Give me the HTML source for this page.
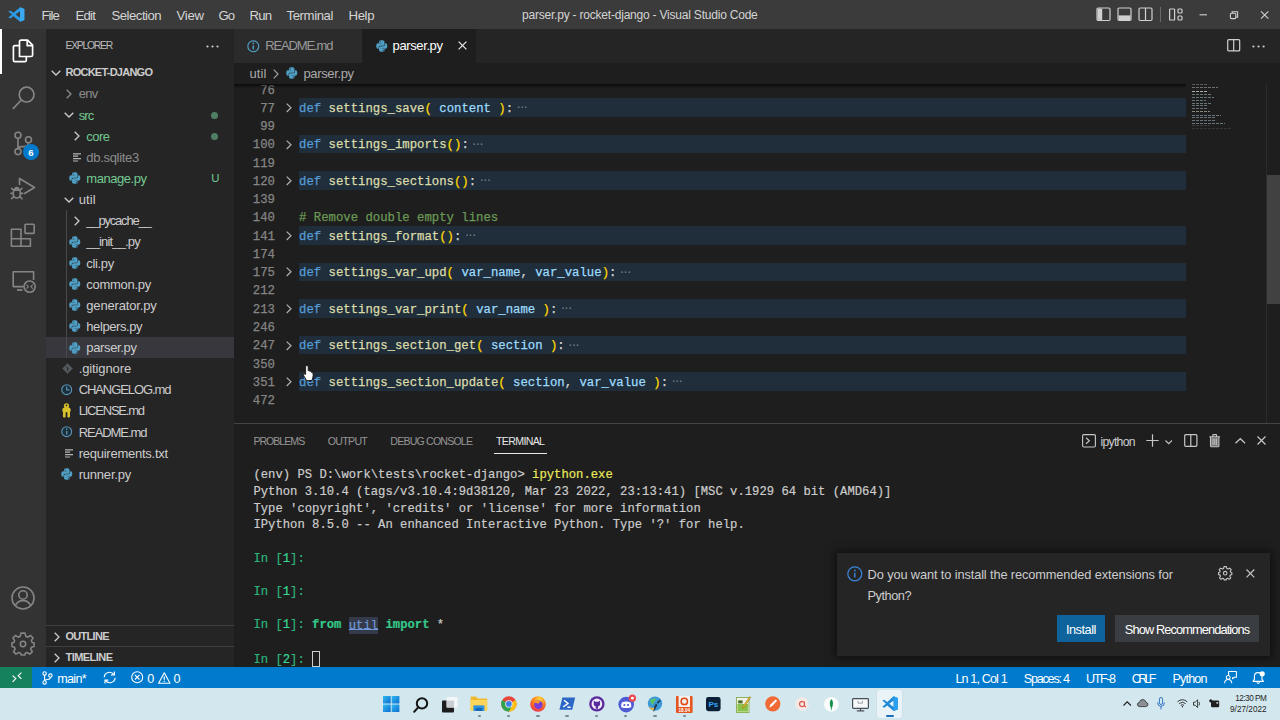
<!DOCTYPE html>
<html lang="en"><head>
<meta charset="utf-8">
<title>parser.py - rocket-django - Visual Studio Code</title>
<style>
*{box-sizing:border-box;margin:0;padding:0}
html,body{width:1280px;height:720px;overflow:hidden;background:#1e1e1e}
body{position:relative;font-family:"Liberation Sans",sans-serif;font-size:13px;color:#ccc;-webkit-font-smoothing:antialiased}
.abs{position:absolute}
.t{position:absolute;white-space:nowrap;display:block}
svg{display:block;overflow:visible}
/* title bar */
#titlebar{left:0;top:0;width:1280px;height:29px;background:#3b3b3b}
#titlebar .m{top:0.9px;height:29px;line-height:29px;font-size:13.2px;color:#d4d4d4}
/* activity bar */
#activity{left:0;top:29px;width:46px;height:638px;background:#333333}
/* sidebar */
#sidebar{left:46px;top:29px;width:188px;height:638px;background:#252526}
.row{position:absolute;left:0;width:188px;height:21px;line-height:21px;font-size:13px;color:#cccccc;white-space:nowrap}
.row .t{top:0;height:21px;line-height:21.5px}
.row .hd{font-size:11px;font-weight:bold;color:#cccccc;line-height:21px}
.dot{position:absolute;top:7px;width:7px;height:7px;border-radius:4px;background:#4f7f63}
.g{color:#73c991}.dim{color:#8c8c8c}
/* editor */
#tabs{left:234px;top:29px;width:1046px;height:34px;background:#252526}
#crumbs{left:234px;top:63px;width:1046px;height:21px;background:#1e1e1e}
#code{left:234px;top:84px;width:1046px;height:339px;background:#1e1e1e;overflow:hidden}
.ln{position:absolute;left:0;width:1046px;height:18.27px;line-height:18.27px;font-family:"Liberation Mono",monospace;font-size:12.3px;white-space:pre;color:#d4d4d4;-webkit-text-stroke:0.25px}
.ln .no{position:absolute;top:1.4px;left:0;width:41px;text-align:right;color:#858585}
.ln .tx{position:absolute;top:1.4px;left:65px}
.ln.f::before{content:"";position:absolute;left:65px;top:0;width:887px;height:18.27px;background:#202d3a}
.k{color:#569cd6}.fn{color:#dcdcaa}.v{color:#9cdcfe}.p{color:#ffd700}.c{color:#6a9955}.e{color:#7d8791;font-size:10px;letter-spacing:-2.4px;margin-left:2.6px;position:relative;top:-1.4px;-webkit-text-stroke:0}
.tb{top:0;height:35px;line-height:34px;font-size:13px}
.cb{top:0.6px;height:20px;line-height:20px;font-size:13px;color:#a9a9a9}
.mm{left:958px;height:1px;background:repeating-linear-gradient(90deg,currentColor 0 3px,transparent 3px 4px)}
/* panel */
#panel{left:234px;top:425px;width:1046px;height:242px;background:#1e1e1e}
#pborder{left:234px;top:423.3px;width:1046px;height:1px;background:#454545}
.pt{top:7.2px;height:18px;line-height:18px;font-size:10.6px}
.tl{position:absolute;left:19.4px;letter-spacing:0.02px;height:16.64px;line-height:16.64px;font-family:"Liberation Mono",monospace;font-size:12.2px;white-space:pre;color:#cccccc;-webkit-text-stroke:0.2px}
.tg{color:#2db57c}.tb2{color:#38d996}.ty{color:#e8e85a}.tk{color:#35c98a;font-weight:bold}.tu{color:#6e98d8;background:#353a4a;text-decoration:underline;padding:1.5px 0}
.cur{display:inline-block;width:7.8px;height:16px;border:1px solid #cfcfcf;vertical-align:-3.6px}
#notif{left:837.2px;top:553.3px;width:432.4px;height:103px;background:#252526;box-shadow:0 0 8px 2px rgba(0,0,0,.5)}
#notif .n{font-size:12.8px;line-height:21px;color:#cccccc}
.btn{height:26.6px}
/* status */
#status{left:0;top:667px;width:1280px;height:21px;background:#007acc;color:#fff;font-size:12.6px}
#status .s{top:2.1px;height:21px;line-height:21px}
#taskbar{left:0;top:688px;width:1280px;height:32px;background:#d3e8ee}
.tk2{font-size:8.2px;line-height:11px;color:#1f1f1f}
</style>
</head>
<body>
<div id="titlebar" class="abs">
<svg class="abs" style="left:8px;top:7px" width="17" height="15" viewBox="0 0 100 100" preserveAspectRatio="none"><path d="M71 2 L96 13 V87 L71 98 L32 61 L13 76 L2 70 L24 50 L2 30 L13 24 L32 39 Z M71 29 L44 50 L71 71 Z" fill="#2a9be6" fill-rule="evenodd"></path><path d="M71 2 L96 13 V87 L71 98 Z" fill="#3aa9f0"></path></svg>
<span class="t m" style="left: 41.5px; width: 18.3px; letter-spacing: -0.98px;">File</span>
<span class="t m" style="left: 75.5px; width: 20.3px; letter-spacing: -0.81px;">Edit</span>
<span class="t m" style="left: 111.5px; width: 50.2px; letter-spacing: -0.51px;">Selection</span>
<span class="t m" style="left: 176.5px; width: 27.5px; letter-spacing: -0.29px;">View</span>
<span class="t m" style="left: 218.5px; width: 16.5px; letter-spacing: -1.09px;">Go</span>
<span class="t m" style="left: 249.5px; width: 22.5px; letter-spacing: -0.85px;">Run</span>
<span class="t m" style="left: 286.5px; width: 47px; letter-spacing: -0.41px;">Terminal</span>
<span class="t m" style="left: 348.5px; width: 26px; letter-spacing: -0.38px;">Help</span>
<span class="t m" style="left: 522px; width: 236px; font-size: 12px; letter-spacing: -0.21px;">parser.py - rocket-django - Visual Studio Code</span>
<svg class="abs" style="left:1096px;top:7px" width="90" height="15" viewBox="0 0 90 15" fill="none" stroke="#d0d0d0" stroke-width="1.2">
<rect x="1" y="1" width="13" height="12.5" rx="1.2"></rect><rect x="1.6" y="1.6" width="4.6" height="11.3" fill="#d0d0d0" stroke="none"></rect>
<rect x="22" y="1" width="13" height="12.5" rx="1.2"></rect><rect x="22.6" y="8.4" width="11.8" height="4.6" fill="#d0d0d0" stroke="none"></rect>
<rect x="43" y="1" width="13" height="12.5" rx="1.2"></rect><path d="M49.5 1V13.5"></path>
<path d="M64.5 0V15" stroke="#6a6a6a" stroke-width="1"></path>
<rect x="73.6" y="2" width="5" height="11" rx="0.6"></rect><rect x="82" y="2" width="4" height="4" rx="1"></rect><rect x="82" y="9" width="4" height="4" rx="1"></rect>
</svg>
<svg class="abs" style="left:1199px;top:8px" width="72" height="14" viewBox="0 0 72 14" fill="none" stroke="#d0d0d0" stroke-width="1.1">
<path d="M0.5 6.8H8"></path>
<rect x="31.4" y="5.2" width="5.4" height="5.4" rx="1"></rect><path d="M33.2 5.2V3.8H38.6V9.2H36.8"></path>
<path d="M62 3.3L69.4 10.6M69.4 3.3L62 10.6"></path>
</svg>
</div>
<div id="activity" class="abs">
<div class="abs" style="left:0;top:0;width:2px;height:45px;background:#ffffff"></div>
<!-- explorer -->
<svg class="abs" style="left:12px;top:10px" width="22" height="24" viewBox="0 0 22 24" fill="none" stroke="#ffffff" stroke-width="1.7" stroke-linejoin="round"><path d="M7.5 17.5V2.6Q7.5 1.2 9 1.2H15.6L20.6 6.2V16Q20.6 17.5 19 17.5Z"></path><path d="M15.2 1.4V6.6H20.4"></path><path d="M7.3 6.6H2.9Q1.4 6.6 1.4 8.1V21.2Q1.4 22.7 2.9 22.7H12.8Q14.3 22.7 14.3 21.2V17.7"></path></svg>
<!-- search -->
<svg class="abs" style="left:12px;top:57px" width="24" height="24" viewBox="0 0 24 24" fill="none" stroke="#858585" stroke-width="1.7" stroke-linecap="round"><circle cx="14.6" cy="8.6" r="7.4"></circle><path d="M9.3 14L1.3 22.4"></path></svg>
<!-- scm -->
<svg class="abs" style="left:13px;top:102px" width="22" height="26" viewBox="0 0 22 26" fill="none" stroke="#858585" stroke-width="1.6"><circle cx="5" cy="4.2" r="3"></circle><circle cx="5" cy="20.6" r="3"></circle><circle cx="15.5" cy="8.8" r="3"></circle><path d="M5 7.2V17.6M15.5 11.8Q15.5 15.4 11 15.6H8Q5.4 15.8 5 17.6"></path></svg>
<div class="abs" style="left:23px;top:115px;width:15.6px;height:15.6px;border-radius:8px;background:#007acc"></div>
<span class="t" style="left:28.3px;top:116.5px;font-size:9.5px;font-weight:bold;color:#fff;line-height:13px">6</span>
<!-- debug -->
<svg class="abs" style="left:10px;top:148px" width="26" height="26" viewBox="0 0 26 26" fill="none" stroke="#858585" stroke-width="1.6" stroke-linejoin="round" stroke-linecap="round"><path d="M9.5 7.5V1.5L24.5 10.5L14.5 16.5"></path><ellipse cx="6.8" cy="16.4" rx="3.6" ry="4.6"></ellipse><path d="M3.6 13.2H10M1 16.4H3.2M10.4 16.4H12.6M1.6 11.4L3.8 13.2M12 11.4L9.8 13.2M1.6 21.6L3.8 19.6M12 21.6L9.8 19.6M5 11.6Q6.8 9.8 8.6 11.6"></path></svg>
<!-- extensions -->
<svg class="abs" style="left:10px;top:194px" width="26" height="25" viewBox="0 0 26 25" fill="none" stroke="#858585" stroke-width="1.6" stroke-linejoin="round"><path d="M1.4 6.2H11V15.8H20.4V23.2H1.4ZM1.4 15.8H11M11 15.8V23.2"></path><rect x="15" y="1.2" width="9.2" height="9.2" rx="0.8"></rect></svg>
<!-- remote explorer -->
<svg class="abs" style="left:11px;top:241px" width="26" height="24" viewBox="0 0 26 24" fill="none" stroke="#858585" stroke-width="1.6" stroke-linejoin="round"><path d="M12.5 16.6H2.2V1.8H22.6V10"></path><path d="M6 20H11.5" stroke-width="1.8"></path><circle cx="18.6" cy="16.6" r="5.6"></circle><path d="M15.4 14.6L17.3 16.6L15.4 18.6M21.8 14.6L19.9 16.6L21.8 18.6" stroke-width="1.1"></path></svg>
<!-- account -->
<svg class="abs" style="left:10px;top:556px" width="26" height="26" viewBox="0 0 26 26" fill="none" stroke="#858585" stroke-width="1.6"><circle cx="13" cy="13" r="11"></circle><circle cx="13" cy="10" r="4.2"></circle><path d="M5.4 20.8Q7.2 15.6 13 15.6Q18.8 15.6 20.6 20.8"></path></svg>
<!-- gear -->
<svg class="abs" style="left:11px;top:602.6px" width="24" height="24" viewBox="-13 -13 26 26" fill="none" stroke="#858585" stroke-width="1.7" stroke-linejoin="round"><circle r="2.9"></circle><path d="M-2.2 -11.8H2.2L3 -8.4L5.2 -7.4L8.2 -9.2L10.9 -6.5L9.1 -3.6L9.9 -1.6L12 -1.2V2.6L9.1 3.4L8.3 5.4L10.1 8.3L7.4 11L4.4 9.2L2.4 10.1L2 12H-2L-2.6 10.1L-4.6 9.2L-7.6 11L-10.3 8.3L-8.5 5.4L-9.3 3.4L-12 2.6V-1.2L-9.9 -1.6L-9.1 -3.6L-10.9 -6.5L-8.2 -9.2L-5.2 -7.4L-3 -8.4Z"></path></svg>
</div>
<div id="sidebar" class="abs">
<span class="t" style="left: 19.5px; top: 7px; width: 47.7px; font-size: 10.4px; line-height: 20px; color: rgb(187, 187, 187); letter-spacing: -1.27px;">EXPLORER</span>
<svg class="abs" style="left:159.5px;top:15.5px" width="13" height="3" viewBox="0 0 13 3" fill="#cccccc"><circle cx="1.5" cy="1.5" r="1.1"></circle><circle cx="6.5" cy="1.5" r="1.1"></circle><circle cx="11.5" cy="1.5" r="1.1"></circle></svg>
<div class="row" style="top:33.2px"><svg class="abs" style="left:4.799999999999997px;top:7.5px" width="10" height="6" viewBox="0 0 10 6" fill="none" stroke="#cccccc" stroke-width="1.3"><path d="M0.7 0.7L5 5L9.3 0.7"></path></svg><span class="t hd" style="left: 19.5px; width: 87.5px; letter-spacing: -0.76px;">ROCKET-DJANGO</span></div>
<div class="row" style="top:54.3px"><svg class="abs" style="left:20px;top:5.5px" width="6" height="10" viewBox="0 0 6 10" fill="none" stroke="#8c8c8c" stroke-width="1.3"><path d="M0.7 0.7L5 5L0.7 9.3"></path></svg><span class="t dim" style="left: 32.7px; width: 19.5px; letter-spacing: -0.73px;">env</span></div>
<div class="row" style="top:75.5px"><svg class="abs" style="left:17.799999999999997px;top:7.5px" width="10" height="6" viewBox="0 0 10 6" fill="none" stroke="#cccccc" stroke-width="1.3"><path d="M0.7 0.7L5 5L9.3 0.7"></path></svg><span class="t g" style="left: 32.7px; width: 15.5px; letter-spacing: -0.92px;">src</span><i class="dot" style="left:164.5px"></i></div>
<div class="row" style="top:96.6px"><svg class="abs" style="left:27.5px;top:5.5px" width="6" height="10" viewBox="0 0 6 10" fill="none" stroke="#cccccc" stroke-width="1.3"><path d="M0.7 0.7L5 5L0.7 9.3"></path></svg><span class="t g" style="left: 40.3px; width: 23.7px; letter-spacing: -0.53px;">core</span><i class="dot" style="left:164.5px"></i></div>
<div class="row" style="top:117.8px"><svg class="abs" style="left:26.5px;top:6px" width="8" height="9" viewBox="0 0 8 9" stroke="#b4b4b4" stroke-width="1.2"><path d="M0 0.8H8M0 3.2H5M0 5.6H8M0 8H5"></path></svg><span class="t dim" style="left: 40.3px; width: 53px; letter-spacing: -0.3px;">db.sqlite3</span></div>
<div class="row" style="top:138.9px"><svg class="abs" style="left:23px;top:4.5px" width="11.5" height="12" viewBox="0 0 23 24"><path d="M11.4 0.6C5.6 0.6 6 3.1 6 3.1V5.8H11.6V6.7H3.8S0.4 6.3 0.4 12C0.4 17.7 3.4 17.4 3.4 17.4H5.4V14.6S5.3 11.6 8.4 11.6H14S16.9 11.6 16.9 8.8V3.6S17.3 0.6 11.4 0.6ZM8.3 2.4A1.05 1.05 0 1 1 8.3 4.5A1.05 1.05 0 0 1 8.3 2.4Z" fill="#4f9ec4"></path><path d="M11.6 23.4C17.4 23.4 17 20.9 17 20.9V18.2H11.4V17.3H19.2S22.6 17.7 22.6 12C22.6 6.3 19.6 6.6 19.6 6.6H17.6V9.4S17.7 12.4 14.6 12.4H9S6.1 12.4 6.1 15.2V20.4S5.7 23.4 11.6 23.4ZM14.7 21.6A1.05 1.05 0 1 1 14.7 19.5A1.05 1.05 0 0 1 14.7 21.6Z" fill="#4f9ec4"></path></svg><span class="t g" style="left: 40.3px; width: 60.7px; letter-spacing: -0.45px;">manage.py</span><span class="t g" style="left: 165.3px; width: 7px; font-size: 11.4px; letter-spacing: -1.23px;">U</span></div>
<div class="row" style="top:160.0px"><svg class="abs" style="left:17.799999999999997px;top:7.5px" width="10" height="6" viewBox="0 0 10 6" fill="none" stroke="#cccccc" stroke-width="1.3"><path d="M0.7 0.7L5 5L9.3 0.7"></path></svg><span class="t " style="left: 32.7px; width: 17px; letter-spacing: 0.13px;">util</span></div>
<div class="row" style="top:181.2px"><svg class="abs" style="left:27.5px;top:5.5px" width="6" height="10" viewBox="0 0 6 10" fill="none" stroke="#cccccc" stroke-width="1.3"><path d="M0.7 0.7L5 5L0.7 9.3"></path></svg><span class="t " style="left: 40.3px; width: 65.4px; letter-spacing: -1.19px;">__pycache__</span></div>
<div class="row" style="top:202.3px"><svg class="abs" style="left:23px;top:4.5px" width="11.5" height="12" viewBox="0 0 23 24"><path d="M11.4 0.6C5.6 0.6 6 3.1 6 3.1V5.8H11.6V6.7H3.8S0.4 6.3 0.4 12C0.4 17.7 3.4 17.4 3.4 17.4H5.4V14.6S5.3 11.6 8.4 11.6H14S16.9 11.6 16.9 8.8V3.6S17.3 0.6 11.4 0.6ZM8.3 2.4A1.05 1.05 0 1 1 8.3 4.5A1.05 1.05 0 0 1 8.3 2.4Z" fill="#4f9ec4"></path><path d="M11.6 23.4C17.4 23.4 17 20.9 17 20.9V18.2H11.4V17.3H19.2S22.6 17.7 22.6 12C22.6 6.3 19.6 6.6 19.6 6.6H17.6V9.4S17.7 12.4 14.6 12.4H9S6.1 12.4 6.1 15.2V20.4S5.7 23.4 11.6 23.4ZM14.7 21.6A1.05 1.05 0 1 1 14.7 19.5A1.05 1.05 0 0 1 14.7 21.6Z" fill="#4f9ec4"></path></svg><span class="t " style="left: 40.3px; width: 54.4px; letter-spacing: -0.85px;">__init__.py</span></div>
<div class="row" style="top:223.5px"><svg class="abs" style="left:23px;top:4.5px" width="11.5" height="12" viewBox="0 0 23 24"><path d="M11.4 0.6C5.6 0.6 6 3.1 6 3.1V5.8H11.6V6.7H3.8S0.4 6.3 0.4 12C0.4 17.7 3.4 17.4 3.4 17.4H5.4V14.6S5.3 11.6 8.4 11.6H14S16.9 11.6 16.9 8.8V3.6S17.3 0.6 11.4 0.6ZM8.3 2.4A1.05 1.05 0 1 1 8.3 4.5A1.05 1.05 0 0 1 8.3 2.4Z" fill="#4f9ec4"></path><path d="M11.6 23.4C17.4 23.4 17 20.9 17 20.9V18.2H11.4V17.3H19.2S22.6 17.7 22.6 12C22.6 6.3 19.6 6.6 19.6 6.6H17.6V9.4S17.7 12.4 14.6 12.4H9S6.1 12.4 6.1 15.2V20.4S5.7 23.4 11.6 23.4ZM14.7 21.6A1.05 1.05 0 1 1 14.7 19.5A1.05 1.05 0 0 1 14.7 21.6Z" fill="#4f9ec4"></path></svg><span class="t " style="left: 40.3px; width: 28px; letter-spacing: -0.33px;">cli.py</span></div>
<div class="row" style="top:244.6px"><svg class="abs" style="left:23px;top:4.5px" width="11.5" height="12" viewBox="0 0 23 24"><path d="M11.4 0.6C5.6 0.6 6 3.1 6 3.1V5.8H11.6V6.7H3.8S0.4 6.3 0.4 12C0.4 17.7 3.4 17.4 3.4 17.4H5.4V14.6S5.3 11.6 8.4 11.6H14S16.9 11.6 16.9 8.8V3.6S17.3 0.6 11.4 0.6ZM8.3 2.4A1.05 1.05 0 1 1 8.3 4.5A1.05 1.05 0 0 1 8.3 2.4Z" fill="#4f9ec4"></path><path d="M11.6 23.4C17.4 23.4 17 20.9 17 20.9V18.2H11.4V17.3H19.2S22.6 17.7 22.6 12C22.6 6.3 19.6 6.6 19.6 6.6H17.6V9.4S17.7 12.4 14.6 12.4H9S6.1 12.4 6.1 15.2V20.4S5.7 23.4 11.6 23.4ZM14.7 21.6A1.05 1.05 0 1 1 14.7 19.5A1.05 1.05 0 0 1 14.7 21.6Z" fill="#4f9ec4"></path></svg><span class="t " style="left: 40.3px; width: 65px; letter-spacing: -0.28px;">common.py</span></div>
<div class="row" style="top:265.7px"><svg class="abs" style="left:23px;top:4.5px" width="11.5" height="12" viewBox="0 0 23 24"><path d="M11.4 0.6C5.6 0.6 6 3.1 6 3.1V5.8H11.6V6.7H3.8S0.4 6.3 0.4 12C0.4 17.7 3.4 17.4 3.4 17.4H5.4V14.6S5.3 11.6 8.4 11.6H14S16.9 11.6 16.9 8.8V3.6S17.3 0.6 11.4 0.6ZM8.3 2.4A1.05 1.05 0 1 1 8.3 4.5A1.05 1.05 0 0 1 8.3 2.4Z" fill="#4f9ec4"></path><path d="M11.6 23.4C17.4 23.4 17 20.9 17 20.9V18.2H11.4V17.3H19.2S22.6 17.7 22.6 12C22.6 6.3 19.6 6.6 19.6 6.6H17.6V9.4S17.7 12.4 14.6 12.4H9S6.1 12.4 6.1 15.2V20.4S5.7 23.4 11.6 23.4ZM14.7 21.6A1.05 1.05 0 1 1 14.7 19.5A1.05 1.05 0 0 1 14.7 21.6Z" fill="#4f9ec4"></path></svg><span class="t " style="left: 40.3px; width: 70.4px; letter-spacing: -0.17px;">generator.py</span></div>
<div class="row" style="top:286.9px"><svg class="abs" style="left:23px;top:4.5px" width="11.5" height="12" viewBox="0 0 23 24"><path d="M11.4 0.6C5.6 0.6 6 3.1 6 3.1V5.8H11.6V6.7H3.8S0.4 6.3 0.4 12C0.4 17.7 3.4 17.4 3.4 17.4H5.4V14.6S5.3 11.6 8.4 11.6H14S16.9 11.6 16.9 8.8V3.6S17.3 0.6 11.4 0.6ZM8.3 2.4A1.05 1.05 0 1 1 8.3 4.5A1.05 1.05 0 0 1 8.3 2.4Z" fill="#4f9ec4"></path><path d="M11.6 23.4C17.4 23.4 17 20.9 17 20.9V18.2H11.4V17.3H19.2S22.6 17.7 22.6 12C22.6 6.3 19.6 6.6 19.6 6.6H17.6V9.4S17.7 12.4 14.6 12.4H9S6.1 12.4 6.1 15.2V20.4S5.7 23.4 11.6 23.4ZM14.7 21.6A1.05 1.05 0 1 1 14.7 19.5A1.05 1.05 0 0 1 14.7 21.6Z" fill="#4f9ec4"></path></svg><span class="t " style="left: 40.3px; width: 56.2px; letter-spacing: -0.42px;">helpers.py</span></div>
<div class="row" style="top:308.0px;background:#37373d"><svg class="abs" style="left:23px;top:4.5px" width="11.5" height="12" viewBox="0 0 23 24"><path d="M11.4 0.6C5.6 0.6 6 3.1 6 3.1V5.8H11.6V6.7H3.8S0.4 6.3 0.4 12C0.4 17.7 3.4 17.4 3.4 17.4H5.4V14.6S5.3 11.6 8.4 11.6H14S16.9 11.6 16.9 8.8V3.6S17.3 0.6 11.4 0.6ZM8.3 2.4A1.05 1.05 0 1 1 8.3 4.5A1.05 1.05 0 0 1 8.3 2.4Z" fill="#4f9ec4"></path><path d="M11.6 23.4C17.4 23.4 17 20.9 17 20.9V18.2H11.4V17.3H19.2S22.6 17.7 22.6 12C22.6 6.3 19.6 6.6 19.6 6.6H17.6V9.4S17.7 12.4 14.6 12.4H9S6.1 12.4 6.1 15.2V20.4S5.7 23.4 11.6 23.4ZM14.7 21.6A1.05 1.05 0 1 1 14.7 19.5A1.05 1.05 0 0 1 14.7 21.6Z" fill="#4f9ec4"></path></svg><span class="t " style="left: 40.3px; width: 50.7px; letter-spacing: -0.35px;">parser.py</span></div>
<div class="row" style="top:329.2px"><svg class="abs" style="left:15.5px;top:5px" width="11" height="11" viewBox="0 0 11 11"><path d="M5.5 0.3L10.7 5.5L5.5 10.7L0.3 5.5Z" fill="#54595d"></path><path d="M4.2 3.4L6.6 5.8M5.6 4.8V8" stroke="#2a2a2b" stroke-width="1"></path></svg><span class="t " style="left: 32.7px; width: 52.5px; letter-spacing: -0.11px;">.gitignore</span></div>
<div class="row" style="top:350.3px"><svg class="abs" style="left:14.799999999999997px;top:4.5px" width="11.4" height="11.4" viewBox="0 0 12 12" fill="none" stroke="#5b93b3" stroke-width="1.2"><circle cx="6" cy="6" r="5.2" fill="#1b2f3b"></circle><path d="M6 2.6V6.2H8.8"></path></svg><span class="t " style="left: 32.7px; width: 92.8px; letter-spacing: -1.09px;">CHANGELOG.md</span></div>
<div class="row" style="top:371.4px"><svg class="abs" style="left:16.200000000000003px;top:3px" width="9" height="15" viewBox="0 0 9 15" fill="#d8c32c"><circle cx="4.5" cy="2.8" r="2.6"></circle><circle cx="2.8" cy="7" r="2.5"></circle><circle cx="6.2" cy="7" r="2.5"></circle><rect x="1" y="8" width="2.6" height="6.6" rx="1"></rect><rect x="5.4" y="8" width="2.6" height="6.6" rx="1"></rect><circle cx="4.5" cy="2.4" r="0.9" fill="#252526"></circle></svg><span class="t " style="left: 32.7px; width: 66.3px; letter-spacing: -1.22px;">LICENSE.md</span></div>
<div class="row" style="top:392.6px"><svg class="abs" style="left:14.799999999999997px;top:4.5px" width="11.4" height="11.4" viewBox="0 0 12 12" fill="none" stroke="#5b93b3" stroke-width="1.2"><circle cx="6" cy="6" r="5.2" fill="#1b2f3b"></circle><path d="M6 5.2V9" stroke-width="1.4"></path><circle cx="6" cy="3.3" r="0.8" fill="#4f9ec4" stroke="none"></circle></svg><span class="t " style="left: 32.7px; width: 68.8px; letter-spacing: -1.06px;">README.md</span></div>
<div class="row" style="top:413.7px"><svg class="abs" style="left:18.799999999999997px;top:6px" width="8" height="9" viewBox="0 0 8 9" stroke="#b4b4b4" stroke-width="1.2"><path d="M0 0.8H8M0 3.2H5M0 5.6H8M0 8H5"></path></svg><span class="t " style="left: 32.7px; width: 89.5px; letter-spacing: -0.25px;">requirements.txt</span></div>
<div class="row" style="top:434.9px"><svg class="abs" style="left:15px;top:4.5px" width="11.5" height="12" viewBox="0 0 23 24"><path d="M11.4 0.6C5.6 0.6 6 3.1 6 3.1V5.8H11.6V6.7H3.8S0.4 6.3 0.4 12C0.4 17.7 3.4 17.4 3.4 17.4H5.4V14.6S5.3 11.6 8.4 11.6H14S16.9 11.6 16.9 8.8V3.6S17.3 0.6 11.4 0.6ZM8.3 2.4A1.05 1.05 0 1 1 8.3 4.5A1.05 1.05 0 0 1 8.3 2.4Z" fill="#4f9ec4"></path><path d="M11.6 23.4C17.4 23.4 17 20.9 17 20.9V18.2H11.4V17.3H19.2S22.6 17.7 22.6 12C22.6 6.3 19.6 6.6 19.6 6.6H17.6V9.4S17.7 12.4 14.6 12.4H9S6.1 12.4 6.1 15.2V20.4S5.7 23.4 11.6 23.4ZM14.7 21.6A1.05 1.05 0 1 1 14.7 19.5A1.05 1.05 0 0 1 14.7 21.6Z" fill="#4f9ec4"></path></svg><span class="t " style="left: 32.7px; width: 52.5px; letter-spacing: -0.21px;">runner.py</span></div>
<div class="abs" style="left:19.5px;top:181.0px;width:1px;height:148px;background:#4a4a4a"></div>
<div class="abs" style="left:0;top:596px;width:188px;height:1px;background:#3f3f40"></div>
<div class="row" style="top:597px"><svg class="abs" style="left:7.5px;top:5.5px" width="6" height="10" viewBox="0 0 6 10" fill="none" stroke="#cccccc" stroke-width="1.3"><path d="M0.7 0.7L5 5L0.7 9.3"></path></svg><span class="t hd" style="left: 19.5px; width: 44px; letter-spacing: -0.71px;">OUTLINE</span></div>
<div class="abs" style="left:0;top:617px;width:188px;height:1px;background:#3f3f40"></div>
<div class="row" style="top:618px"><svg class="abs" style="left:7.5px;top:5.5px" width="6" height="10" viewBox="0 0 6 10" fill="none" stroke="#cccccc" stroke-width="1.3"><path d="M0.7 0.7L5 5L0.7 9.3"></path></svg><span class="t hd" style="left: 19.5px; width: 47.5px; letter-spacing: -0.55px;">TIMELINE</span></div>
</div>
<div id="tabs" class="abs">
<div class="abs" style="left:0;top:0;width:127.5px;height:34px;background:#2b2b2b"></div>
<div class="abs" style="left:127.5px;top:0;width:114.5px;height:34px;background:#1e1e1e"></div>
<svg class="abs" style="left:13.0px;top:10.5px" width="12.6" height="12.6" viewBox="0 0 12 12" fill="none" stroke="#4f9ec4" stroke-width="1.15"><circle cx="6" cy="6" r="5.2"></circle><path d="M6 5.2V9" stroke-width="1.4"></path><circle cx="6" cy="3.3" r="0.8" fill="#4f9ec4" stroke="none"></circle></svg>
<span class="t tb" style="left: 31.3px; width: 68.2px; color: rgb(154, 154, 154); letter-spacing: -1.14px;">README.md</span>
<svg class="abs" style="left:141.5px;top:11px" width="11.5" height="12" viewBox="0 0 23 24"><path d="M11.4 0.6C5.6 0.6 6 3.1 6 3.1V5.8H11.6V6.7H3.8S0.4 6.3 0.4 12C0.4 17.7 3.4 17.4 3.4 17.4H5.4V14.6S5.3 11.6 8.4 11.6H14S16.9 11.6 16.9 8.8V3.6S17.3 0.6 11.4 0.6ZM8.3 2.4A1.05 1.05 0 1 1 8.3 4.5A1.05 1.05 0 0 1 8.3 2.4Z" fill="#4f9ec4"></path><path d="M11.6 23.4C17.4 23.4 17 20.9 17 20.9V18.2H11.4V17.3H19.2S22.6 17.7 22.6 12C22.6 6.3 19.6 6.6 19.6 6.6H17.6V9.4S17.7 12.4 14.6 12.4H9S6.1 12.4 6.1 15.2V20.4S5.7 23.4 11.6 23.4ZM14.7 21.6A1.05 1.05 0 1 1 14.7 19.5A1.05 1.05 0 0 1 14.7 21.6Z" fill="#4f9ec4"></path></svg>
<span class="t tb" style="left: 158.6px; width: 50.4px; color: rgb(255, 255, 255); letter-spacing: -0.39px;">parser.py</span>
<svg class="abs" style="left:224.0px;top:12.3px" width="9" height="9" viewBox="0 0 9 9" fill="none" stroke="#e8e8e8" stroke-width="1.2"><path d="M0.6 0.6L8.4 8.4M8.4 0.6L0.6 8.4"></path></svg>
<svg class="abs" style="left:992.5px;top:10px" width="13.4" height="12.6" viewBox="0 0 13.4 12.6" fill="none" stroke="#d0d0d0" stroke-width="1.2"><rect x="0.7" y="0.7" width="12" height="11.2" rx="1"></rect><path d="M6.7 0.7V11.9"></path></svg>
<svg class="abs" style="left:1017.5px;top:15.5px" width="13" height="3" viewBox="0 0 13 3" fill="#d0d0d0"><circle cx="1.4" cy="1.5" r="1.1"></circle><circle cx="6.5" cy="1.5" r="1.1"></circle><circle cx="11.6" cy="1.5" r="1.1"></circle></svg>
</div>
<div id="crumbs" class="abs">
<span class="t cb" style="left: 15.5px; width: 17px; letter-spacing: 0.13px;">util</span>
<svg class="abs" style="left:38.5px;top:5.8px" width="6" height="10" viewBox="0 0 6 10" fill="none" stroke="#a0a0a0" stroke-width="1.2"><path d="M0.7 0.7L5 5L0.7 9.3"></path></svg>
<svg class="abs" style="left:52px;top:3.6px" width="11.5" height="12" viewBox="0 0 23 24"><path d="M11.4 0.6C5.6 0.6 6 3.1 6 3.1V5.8H11.6V6.7H3.8S0.4 6.3 0.4 12C0.4 17.7 3.4 17.4 3.4 17.4H5.4V14.6S5.3 11.6 8.4 11.6H14S16.9 11.6 16.9 8.8V3.6S17.3 0.6 11.4 0.6ZM8.3 2.4A1.05 1.05 0 1 1 8.3 4.5A1.05 1.05 0 0 1 8.3 2.4Z" fill="#4f9ec4"></path><path d="M11.6 23.4C17.4 23.4 17 20.9 17 20.9V18.2H11.4V17.3H19.2S22.6 17.7 22.6 12C22.6 6.3 19.6 6.6 19.6 6.6H17.6V9.4S17.7 12.4 14.6 12.4H9S6.1 12.4 6.1 15.2V20.4S5.7 23.4 11.6 23.4ZM14.7 21.6A1.05 1.05 0 1 1 14.7 19.5A1.05 1.05 0 0 1 14.7 21.6Z" fill="#4f9ec4"></path></svg>
<span class="t cb" style="left: 69.5px; width: 50.5px; letter-spacing: -0.37px;">parser.py</span>
</div>
<div id="code" class="abs">
<div class="ln" style="top:-3.87px"><span class="no">76</span></div>
<div class="ln f" style="top:14.40px"><span class="no">77</span><svg class="abs" style="left:52px;top:4.6px" width="6" height="9.6" viewBox="0 0 6 9.6" fill="none" stroke="#b0b0b0" stroke-width="1.2"><path d="M0.7 0.6L5 4.8L0.7 9"></path></svg><span class="tx"><span class="k">def</span> <span class="fn">settings_save</span><span class="p">(</span> <span class="v">content</span> <span class="p">)</span>:<span class="e">···</span></span></div>
<div class="ln" style="top:32.67px"><span class="no">99</span></div>
<div class="ln f" style="top:50.94px"><span class="no">100</span><svg class="abs" style="left:52px;top:4.6px" width="6" height="9.6" viewBox="0 0 6 9.6" fill="none" stroke="#b0b0b0" stroke-width="1.2"><path d="M0.7 0.6L5 4.8L0.7 9"></path></svg><span class="tx"><span class="k">def</span> <span class="fn">settings_imports</span><span class="p">()</span>:<span class="e">···</span></span></div>
<div class="ln" style="top:69.21px"><span class="no">119</span></div>
<div class="ln f" style="top:87.48px"><span class="no">120</span><svg class="abs" style="left:52px;top:4.6px" width="6" height="9.6" viewBox="0 0 6 9.6" fill="none" stroke="#b0b0b0" stroke-width="1.2"><path d="M0.7 0.6L5 4.8L0.7 9"></path></svg><span class="tx"><span class="k">def</span> <span class="fn">settings_sections</span><span class="p">()</span>:<span class="e">···</span></span></div>
<div class="ln" style="top:105.75px"><span class="no">139</span></div>
<div class="ln" style="top:124.02px"><span class="no">140</span><span class="tx"><span class="c"># Remove double empty lines</span></span></div>
<div class="ln f" style="top:142.29px"><span class="no">141</span><svg class="abs" style="left:52px;top:4.6px" width="6" height="9.6" viewBox="0 0 6 9.6" fill="none" stroke="#b0b0b0" stroke-width="1.2"><path d="M0.7 0.6L5 4.8L0.7 9"></path></svg><span class="tx"><span class="k">def</span> <span class="fn">settings_format</span><span class="p">()</span>:<span class="e">···</span></span></div>
<div class="ln" style="top:160.56px"><span class="no">174</span></div>
<div class="ln f" style="top:178.83px"><span class="no">175</span><svg class="abs" style="left:52px;top:4.6px" width="6" height="9.6" viewBox="0 0 6 9.6" fill="none" stroke="#b0b0b0" stroke-width="1.2"><path d="M0.7 0.6L5 4.8L0.7 9"></path></svg><span class="tx"><span class="k">def</span> <span class="fn">settings_var_upd</span><span class="p">(</span> <span class="v">var_name</span>, <span class="v">var_value</span><span class="p">)</span>:<span class="e">···</span></span></div>
<div class="ln" style="top:197.10px"><span class="no">212</span></div>
<div class="ln f" style="top:215.37px"><span class="no">213</span><svg class="abs" style="left:52px;top:4.6px" width="6" height="9.6" viewBox="0 0 6 9.6" fill="none" stroke="#b0b0b0" stroke-width="1.2"><path d="M0.7 0.6L5 4.8L0.7 9"></path></svg><span class="tx"><span class="k">def</span> <span class="fn">settings_var_print</span><span class="p">(</span> <span class="v">var_name</span> <span class="p">)</span>:<span class="e">···</span></span></div>
<div class="ln" style="top:233.64px"><span class="no">246</span></div>
<div class="ln f" style="top:251.91px"><span class="no">247</span><svg class="abs" style="left:52px;top:4.6px" width="6" height="9.6" viewBox="0 0 6 9.6" fill="none" stroke="#b0b0b0" stroke-width="1.2"><path d="M0.7 0.6L5 4.8L0.7 9"></path></svg><span class="tx"><span class="k">def</span> <span class="fn">settings_section_get</span><span class="p">(</span> <span class="v">section</span> <span class="p">)</span>:<span class="e">···</span></span></div>
<div class="ln" style="top:270.18px"><span class="no">350</span></div>
<div class="ln f" style="top:288.45px"><span class="no">351</span><svg class="abs" style="left:52px;top:4.6px" width="6" height="9.6" viewBox="0 0 6 9.6" fill="none" stroke="#b0b0b0" stroke-width="1.2"><path d="M0.7 0.6L5 4.8L0.7 9"></path></svg><span class="tx"><span class="k">def</span> <span class="fn">settings_section_update</span><span class="p">(</span> <span class="v">section</span>, <span class="v">var_value</span> <span class="p">)</span>:<span class="e">···</span></span></div>
<div class="ln" style="top:306.72px"><span class="no">472</span></div>
<div class="abs" style="left:0;top:0;width:952px;height:4px;background:linear-gradient(rgba(0,0,0,.7),rgba(0,0,0,0))"></div>
<div class="abs mm" style="top:0px;width:16px;color:#5c5c5c"></div>
<div class="abs mm" style="top:3px;width:26px;color:#707070"></div>
<div class="abs mm" style="top:7px;width:15px;color:#a8a8a8"></div>
<div class="abs mm" style="top:10px;width:20px;color:#66757a"></div>
<div class="abs mm" style="top:13px;width:22px;color:#66757a"></div>
<div class="abs mm" style="top:16px;width:14px;color:#66757a"></div>
<div class="abs mm" style="top:19px;width:19px;color:#66757a"></div>
<div class="abs mm" style="top:21px;width:15px;color:#66757a"></div>
<div class="abs mm" style="top:24px;width:16px;color:#66757a"></div>
<div class="abs mm" style="top:27px;width:18px;color:#8a8a78"></div>
<div class="abs mm" style="top:31px;width:29px;color:#66757a"></div>
<div class="abs mm" style="top:33px;width:23px;color:#66757a"></div>
<div class="abs mm" style="top:36px;width:24px;color:#66757a"></div>
<div class="abs mm" style="top:39px;width:33px;color:#66757a"></div>
<div class="abs mm" style="top:41px;width:18px;color:#3c3c3c"></div>
<div class="abs mm" style="top:44px;width:39px;color:#343434"></div>
<div class="abs" style="left:1032px;top:0;width:1px;height:340px;background:#2c2c2c"></div>
<div class="abs" style="left:1032.5px;top:91px;width:13.5px;height:128.5px;background:#414141"></div>
</div>
<svg class="abs" style="left:303px;top:365.2px" width="11" height="16" viewBox="0 0 11 16"><path d="M2.6 9.4V1.8Q2.6 0.5 3.9 0.5Q5.2 0.5 5.2 1.8V5.8Q5.9 5 6.8 5.8V6.4Q7.6 5.8 8.4 6.6V7.4Q9.3 7 9.9 7.9Q10.5 10.4 9.8 12.6L9 15.5H3.6L0.7 10.6Q0.2 9.4 1.2 9Q2 8.8 2.6 9.4Z" fill="#ffffff" stroke="#161616" stroke-width="0.9" stroke-linejoin="round"></path></svg>
<div id="pborder" class="abs"></div>
<div id="panel" class="abs">
<span class="t pt" style="left: 19.4px; width: 51.8px; color: rgb(150, 150, 150); letter-spacing: -1.01px;">PROBLEMS</span>
<span class="t pt" style="left: 93.8px; width: 40px; color: rgb(150, 150, 150); letter-spacing: -0.71px;">OUTPUT</span>
<span class="t pt" style="left: 156.3px; width: 82.7px; color: rgb(150, 150, 150); letter-spacing: -0.81px;">DEBUG CONSOLE</span>
<span class="t pt" style="left: 262px; width: 49px; color: rgb(231, 231, 231); letter-spacing: -0.65px;">TERMINAL</span>
<div class="abs" style="left:260.0px;top:28.0px;width:52.5px;height:1px;background:#e7e7e7"></div>
<svg class="abs" style="left:848.0px;top:9.0px" width="14" height="13.6" viewBox="0 0 14 13.6" fill="none" stroke="#c5c5c5" stroke-width="1.15"><rect x="0.6" y="0.6" width="12.8" height="12.4" rx="1.2"></rect><path d="M4 3.8L7.4 6.8L4 9.8"></path></svg>
<span class="t" style="left: 866.4px; top: 7.6px; width: 35.2px; font-size: 12.2px; line-height: 18px; color: rgb(204, 204, 204); letter-spacing: -0.69px;">ipython</span>
<svg class="abs" style="left:912.2px;top:9.2px" width="13" height="13" viewBox="0 0 13 13" fill="none" stroke="#c5c5c5" stroke-width="1.2"><path d="M6.5 0.3V12.7M0.3 6.5H12.7"></path></svg>
<svg class="abs" style="left:930.8px;top:15.0px" width="7.4" height="4.4" viewBox="0 0 7.4 4.4" fill="none" stroke="#c5c5c5" stroke-width="1.1"><path d="M0.5 0.5L3.7 3.7L6.9 0.5"></path></svg>
<svg class="abs" style="left:950.0px;top:9.2px" width="13.6" height="13" viewBox="0 0 13.6 13" fill="none" stroke="#c5c5c5" stroke-width="1.2"><rect x="0.7" y="0.7" width="12.2" height="11.6" rx="1"></rect><path d="M6.8 0.7V12.3"></path></svg>
<svg class="abs" style="left:974.8px;top:8.8px" width="11.4" height="13.4" viewBox="0 0 11.4 13.4" fill="none" stroke="#c5c5c5" stroke-width="1.1"><path d="M0.3 2.8H11.1M3.8 2.6V1.2Q3.8 0.6 4.4 0.6H7Q7.6 0.6 7.6 1.2V2.6M1.5 3V11.8Q1.5 12.8 2.5 12.8H8.9Q9.9 12.8 9.9 11.8V3"></path><path d="M4 4.6V11M5.7 4.6V11M7.4 4.6V11" stroke-width="0.9"></path><rect x="2" y="3.2" width="7.4" height="9.2" fill="#c5c5c5" opacity=".55" stroke="none"></rect></svg>
<svg class="abs" style="left:1000.8px;top:12.6px" width="10.6" height="5.8" viewBox="0 0 10.6 5.8" fill="none" stroke="#c5c5c5" stroke-width="1.2"><path d="M0.5 5.3L5.3 0.7L10.1 5.3"></path></svg>
<svg class="abs" style="left:1022.8px;top:11.4px" width="9" height="9" viewBox="0 0 9 9" fill="none" stroke="#c5c5c5" stroke-width="1.2"><path d="M0.5 0.5L8.5 8.5M8.5 0.5L0.5 8.5"></path></svg>
<div class="tl" style="top:42.38px">(env) PS D:\work\tests\rocket-django&gt; <span class="ty">ipython.exe</span></div>
<div class="tl" style="top:59.04px">Python 3.10.4 (tags/v3.10.4:9d38120, Mar 23 2022, 23:13:41) [MSC v.1929 64 bit (AMD64)]</div>
<div class="tl" style="top:75.70px">Type 'copyright', 'credits' or 'license' for more information</div>
<div class="tl" style="top:92.36px">IPython 8.5.0 -- An enhanced Interactive Python. Type '?' for help.</div>
<div class="tl" style="top:125.68px"><span class="tg">In [</span><span class="tb2">1</span><span class="tg">]:</span></div>
<div class="tl" style="top:159.00px"><span class="tg">In [</span><span class="tb2">1</span><span class="tg">]:</span></div>
<div class="tl" style="top:192.32px"><span class="tg">In [</span><span class="tb2">1</span><span class="tg">]:</span> <span class="tk">from</span> <span class="tu">util</span> <span class="tk">import</span> *</div>
<div class="tl" style="top:225.64px"><span class="tg">In [</span><span class="tb2">2</span><span class="tg">]:</span> <span class="cur"></span></div>
</div>
<div id="notif" class="abs">
<svg class="abs" style="left:9.6px;top:12.4px" width="15.6" height="15.6" viewBox="0 0 15.6 15.6" fill="none" stroke="#3b86dc" stroke-width="1.2"><circle cx="7.8" cy="7.8" r="7"></circle><path d="M7.8 6.8V11.6" stroke-width="1.4"></path><circle cx="7.8" cy="4.5" r="0.9" fill="#3b86dc" stroke="none"></circle></svg>
<span class="t n" style="left: 30.4px; top: 10.4px; width: 305.2px; letter-spacing: -0.12px;">Do you want to install the recommended extensions for</span>
<span class="t n" style="left: 30.4px; top: 32.2px; width: 44px; letter-spacing: -0.49px;">Python?</span>
<svg class="abs" style="left:380.4px;top:13.2px" width="14.4" height="14.4" viewBox="-13 -13 26 26" fill="none" stroke="#c5c5c5" stroke-width="2" stroke-linejoin="round"><circle r="3.2"></circle><path d="M-2.2 -11.8H2.2L3 -8.4L5.2 -7.4L8.2 -9.2L10.9 -6.5L9.1 -3.6L9.9 -1.6L12 -1.2V2.6L9.1 3.4L8.3 5.4L10.1 8.3L7.4 11L4.4 9.2L2.4 10.1L2 12H-2L-2.6 10.1L-4.6 9.2L-7.6 11L-10.3 8.3L-8.5 5.4L-9.3 3.4L-12 2.6V-1.2L-9.9 -1.6L-9.1 -3.6L-10.9 -6.5L-8.2 -9.2L-5.2 -7.4L-3 -8.4Z"></path></svg>
<svg class="abs" style="left:408.8px;top:16.2px" width="8.8" height="8.8" viewBox="0 0 9 9" fill="none" stroke="#c5c5c5" stroke-width="1.2"><path d="M0.5 0.5L8.5 8.5M8.5 0.5L0.5 8.5"></path></svg>
<div class="abs btn" style="left:219.6px;top:62.2px;width:48.6px;background:#0e639c"><span class="t n" style="left: 9.2px; top: 3.2px; width: 30.4px; color: rgb(255, 255, 255); letter-spacing: -0.51px;">Install</span></div>
<div class="abs btn" style="left:277.6px;top:62.2px;width:144.2px;background:#3a3d41"><span class="t n" style="left: 10px; top: 3.2px; width: 125.4px; color: rgb(255, 255, 255); letter-spacing: -0.89px;">Show Recommendations</span></div>
</div>
<div id="status" class="abs">
<div class="abs" style="left:0;top:0;width:32px;height:21px;background:#16825d"></div>
<svg class="abs" style="left:11.5px;top:5.2px" width="10" height="10.5" viewBox="0 0 10 10.5" fill="none" stroke="#fff" stroke-width="1.15"><path d="M0.6 3.6L3.8 6.6L0.6 9.8M9.4 0.6L6.2 3.7L9.4 6.8"></path></svg>
<svg class="abs" style="left:41.5px;top:3.8px" width="11" height="14" viewBox="0 0 11 14" fill="none" stroke="#fff" stroke-width="1.1"><circle cx="2.6" cy="2.4" r="1.7"></circle><circle cx="2.6" cy="11.4" r="1.7"></circle><circle cx="8.4" cy="4.6" r="1.7"></circle><path d="M2.6 4.1V9.7M8.4 6.3Q8.4 8.4 5.6 8.5Q3 8.6 2.6 9.7"></path></svg>
<span class="t s" style="left: 57.2px; width: 29.5px; letter-spacing: -0.68px;">main*</span>
<svg class="abs" style="left:102.5px;top:4.2px" width="13.4" height="13" viewBox="0 0 13.4 13" fill="none" stroke="#fff" stroke-width="1.15"><path d="M1.2 6.2A5.4 5.4 0 0 1 11 3.6M12.2 6.8A5.4 5.4 0 0 1 2.4 9.4"></path><path d="M11.4 0.6V3.9H8.1M2 12.4V9.1H5.3"></path></svg>
<svg class="abs" style="left:131.4px;top:4.4px" width="12.4" height="12.4" viewBox="0 0 12.4 12.4" fill="none" stroke="#fff" stroke-width="1.1"><circle cx="6.2" cy="6.2" r="5.5"></circle><path d="M3.9 3.9L8.5 8.5M8.5 3.9L3.9 8.5"></path></svg>
<span class="t s" style="left:147.2px">0</span>
<svg class="abs" style="left:157.6px;top:4.6px" width="12.6" height="11.8" viewBox="0 0 12.6 11.8" fill="none" stroke="#fff" stroke-width="1.1" stroke-linejoin="round"><path d="M6.3 0.8L12 11.2H0.6Z"></path><path d="M6.3 4.4V7.8M6.3 8.8V10" stroke-width="1.2"></path></svg>
<span class="t s" style="left:173.4px">0</span>
<span class="t s" style="left: 955.4px; width: 52.3px; letter-spacing: -0.86px;">Ln 1, Col 1</span>
<span class="t s" style="left: 1023.7px; width: 46.4px; letter-spacing: -1.2px;">Spaces: 4</span>
<span class="t s" style="left: 1086px; width: 30px; letter-spacing: -1.42px;">UTF-8</span>
<span class="t s" style="left: 1131.8px; width: 24.7px; letter-spacing: -2.73px;">CRLF</span>
<span class="t s" style="left: 1172.4px; width: 35.1px; letter-spacing: -0.82px;">Python</span>
<svg class="abs" style="left:1223.5px;top:4.4px" width="13" height="12.6" viewBox="0 0 13 12.6" fill="none" stroke="#fff" stroke-width="1.05" stroke-linejoin="round"><path d="M4.6 4.2V0.6H12.4V6.2H10.4L8.6 7.8V6.2"></path><circle cx="4.2" cy="6.4" r="1.9"></circle><path d="M0.6 12.2Q0.9 8.6 4.2 8.6Q7.4 8.6 7.8 12.2"></path></svg>
<svg class="abs" style="left:1252px;top:3.8px" width="13" height="13.6" viewBox="0 0 13 13.6" fill="none" stroke="#fff" stroke-width="1.1" stroke-linejoin="round"><path d="M1 10.4H11.4L10 8.4V5.4Q10 1.6 6.2 1.6Q2.4 1.6 2.4 5.4V8.4Z"></path><path d="M4.8 11.2Q6.2 13.6 7.6 11.2"></path><circle cx="10.2" cy="2.8" r="2.6" fill="#fff" stroke="none"></circle></svg>
</div>
<div id="taskbar" class="abs">
<svg class="abs" style="left:382.6px;top:8.4px" width="16.4" height="16" viewBox="0 0 16.4 16"><defs><linearGradient id="wg" x1="0" y1="0" x2="1" y2="1"><stop offset="0" stop-color="#35b8f3"></stop><stop offset="1" stop-color="#0a6fd0"></stop></linearGradient></defs><rect x="0" y="0" width="7.7" height="7.5" fill="url(#wg)"></rect><rect x="8.7" y="0" width="7.7" height="7.5" fill="url(#wg)"></rect><rect x="0" y="8.5" width="7.7" height="7.5" fill="url(#wg)"></rect><rect x="8.7" y="8.5" width="7.7" height="7.5" fill="url(#wg)"></rect></svg>
<svg class="abs" style="left:413px;top:8.6px" width="15.4" height="16" viewBox="0 0 15.4 16" fill="none" stroke="#151515" stroke-width="2" stroke-linecap="round"><circle cx="9" cy="6.4" r="5.2"></circle><path d="M5.2 10.4L1.2 14.8"></path></svg>
<svg class="abs" style="left:441.8px;top:8.8px" width="15.6" height="15.6" viewBox="0 0 15.6 15.6"><rect x="0" y="3.6" width="12" height="12" rx="1" fill="#1d1d1f"></rect><rect x="4.6" y="0" width="11" height="10.6" rx="1" fill="#f3f6f8"></rect><rect x="4.6" y="3.6" width="7.4" height="7" fill="#c9ced2"></rect></svg>
<svg class="abs" style="left:470.4px;top:8px" width="17.8" height="16" viewBox="0 0 17.8 16"><path d="M0.6 1.6Q0.6 0.6 1.6 0.6H6L7.8 2.4H16.2Q17.2 2.4 17.2 3.4V14Q17.2 15 16.2 15H1.6Q0.6 15 0.6 14Z" fill="#f0b92c"></path><rect x="0.6" y="4" width="16.6" height="11" rx="1" fill="#fbd65a"></rect><rect x="3.4" y="9.4" width="11" height="5.6" fill="#2f8fe0"></rect><rect x="5.6" y="12" width="6.6" height="3" fill="#1468b8"></rect></svg>
<div class="abs" style="left:477.6px;top:27.2px;width:3.6px;height:1.6px;border-radius:1px;background:#7d8a92"></div>
<svg class="abs" style="left:500.6px;top:8.2px" width="15.8" height="15.8" viewBox="-8 -8 16 16"><circle r="7.8" fill="#e8453c"></circle><path d="M0 0L-6.76 3.9A7.8 7.8 0 0 0 0 7.8Q3 7.8 3.4 2Z" fill="#2da44e"></path><path d="M0 0L-6.76 3.9A7.8 7.8 0 0 1 -6.76 -3.9Z" fill="#2da44e"></path><path d="M0 0L3.4 2L0 7.8A7.8 7.8 0 0 0 6.76 -3.9Z" fill="#fbc116"></path><circle r="3.7" fill="#f4f8fb"></circle><circle r="2.9" fill="#3d7ee8"></circle></svg>
<div class="abs" style="left:506.8px;top:27.2px;width:3.6px;height:1.6px;border-radius:1px;background:#7d8a92"></div>
<svg class="abs" style="left:530px;top:8px" width="16" height="16" viewBox="-8 -8 16 16"><defs><radialGradient id="ff" cx="0.6" cy="0.2" r="0.9"><stop offset="0" stop-color="#ffd83a"></stop><stop offset="0.5" stop-color="#ff7a1c"></stop><stop offset="1" stop-color="#e21f56"></stop></radialGradient></defs><circle r="7.8" fill="url(#ff)"></circle><circle cx="0.4" cy="0.8" r="4.2" fill="#7b3bd8"></circle><path d="M-4 -1.4Q-1 -4.6 3 -2.4Q1 -2.2 0.8 -0.6Q-1.6 -0.4 -4 -1.4Z" fill="#ff9a2a"></path></svg>
<div class="abs" style="left:536.2px;top:27.2px;width:3.6px;height:1.6px;border-radius:1px;background:#7d8a92"></div>
<svg class="abs" style="left:559px;top:9.4px" width="16.6" height="13.4" viewBox="0 0 16.6 13.4"><path d="M3.4 0.6H16.2L13.2 12.8H0.4Z" fill="#2d67c6"></path><path d="M5 3.2L9 6.4L4.2 10M8.4 10.2H11.6" fill="none" stroke="#fff" stroke-width="1.4"></path></svg>
<div class="abs" style="left:565.4px;top:27.2px;width:3.6px;height:1.6px;border-radius:1px;background:#7d8a92"></div>
<svg class="abs" style="left:588.8px;top:8.2px" width="15.8" height="15.8" viewBox="-8 -8 16 16"><circle r="7.8" fill="#5b2a9c"></circle><circle r="5.4" fill="#f2ecfa"></circle><path d="M-3.2 -3.4L-1.6 -2.2H1.6L3.2 -3.4V-0.6Q3.6 2 1.2 2.4V5H-1.2V2.4Q-3.6 2 -3.2 -0.6Z" fill="#5b2a9c"></path></svg>
<div class="abs" style="left:594.8px;top:27.2px;width:3.6px;height:1.6px;border-radius:1px;background:#7d8a92"></div>
<svg class="abs" style="left:617.6px;top:5.6px" width="19" height="18.6" viewBox="0 0 19 18.6"><circle cx="8.2" cy="10.6" r="7.8" fill="#4f5bd5"></circle><path d="M3.8 8.4Q8.2 6.4 12.6 8.4Q13.6 11 13.2 13.2Q8.2 15 3.2 13.2Q2.8 11 3.8 8.4Z" fill="#fff"></path><circle cx="6.4" cy="11" r="1.1" fill="#4f5bd5"></circle><circle cx="10" cy="11" r="1.1" fill="#4f5bd5"></circle><circle cx="14.4" cy="4.2" r="3.6" fill="#e8484d"></circle><circle cx="14.4" cy="4.2" r="1.4" fill="#fff"></circle></svg>
<div class="abs" style="left:623.8px;top:27.2px;width:3.6px;height:1.6px;border-radius:1px;background:#7d8a92"></div>
<svg class="abs" style="left:647.4px;top:7.8px" width="16" height="17" viewBox="0 0 16 17"><circle cx="8" cy="7.6" r="7.2" fill="#3b9ad8"></circle><path d="M3 4Q6 1.4 9.6 3.2Q7 5.4 5.8 8.8Q3.2 7.4 3 4Z" fill="#5cc06a"></path><path d="M9.8 6.4L12.8 3.6L13.8 4.8L11 7.8ZM9 7.6L10.4 9Q9 12.4 6.6 16Q5.8 12 9 7.6Z" fill="#223a52"></path><path d="M2 10Q4.4 12.6 7.4 11.6L6.4 14.6Q3 14 2 10Z" fill="#e8b048"></path></svg>
<div class="abs" style="left:653.4px;top:27.2px;width:3.6px;height:1.6px;border-radius:1px;background:#7d8a92"></div>
<svg class="abs" style="left:676.4px;top:7.6px" width="16.6" height="17" viewBox="0 0 16.6 17"><rect x="0" y="0" width="16.6" height="17" rx="1" fill="#e5561e"></rect><rect x="2.6" y="0" width="11.4" height="11" fill="#f4f1ee"></rect><circle cx="8.3" cy="5.4" r="3.2" fill="none" stroke="#dd4814" stroke-width="1.5"></circle><text x="8.3" y="15.6" font-family="Liberation Sans,sans-serif" font-size="4.6" font-weight="bold" fill="#fff" text-anchor="middle">18.04</text></svg>
<div class="abs" style="left:682.8px;top:27.2px;width:3.6px;height:1.6px;border-radius:1px;background:#7d8a92"></div>
<svg class="abs" style="left:706.4px;top:8.6px" width="14.6" height="14.2" viewBox="0 0 14.6 14.2"><rect width="14.6" height="14.2" rx="2.4" fill="#0b1f36"></rect><text x="7.3" y="10.4" font-family="Liberation Sans,sans-serif" font-size="8" font-weight="bold" fill="#31a8ff" text-anchor="middle">Ps</text></svg>
<svg class="abs" style="left:736px;top:7.6px" width="15" height="17" viewBox="0 0 15 17"><rect x="0.4" y="1.6" width="12.6" height="14.8" fill="#f1f4e4" stroke="#7da23a" stroke-width="0.8"></rect><rect x="1.4" y="8" width="10.6" height="7.6" fill="#8bc34a"></rect><rect x="2.2" y="4.4" width="4.4" height="3" fill="#476a2a"></rect><path d="M13.8 0.4L14.8 1.4L8.2 11.6L6.6 12.2L6.8 10.4Z" fill="#e8b72c" stroke="#7a5a14" stroke-width="0.4"></path></svg>
<svg class="abs" style="left:765px;top:8.2px" width="15.6" height="15.6" viewBox="-8 -8 16 16"><circle r="7.8" fill="#ef6a35"></circle><path d="M-3.6 3.8L-2.4 0.6L3 -4.4L4.4 -3L-0.8 2.4Z" fill="#fff"></path></svg>
<svg class="abs" style="left:794.6px;top:9px" width="14" height="14" viewBox="-7 -7 14 14"><circle r="6.8" fill="#f4e9e6"></circle><path d="M2.4 -1.2A2.6 2.6 0 1 0 2.4 1.4V-2.6M2.4 1Q2.6 3 4 2.6" fill="none" stroke="#dc5a4e" stroke-width="1.3"></path></svg>
<svg class="abs" style="left:823.6px;top:8.6px" width="14.8" height="14.8" viewBox="-7.4 -7.4 14.8 14.8"><circle r="7.3" fill="#fbfdfc"></circle><path d="M0 -5.4Q3.4 -1.4 0 4.4Q-3.4 -1.4 0 -5.4Z" fill="#14924a"></path><path d="M0 3.6V5.8" stroke="#14924a" stroke-width="0.7"></path></svg>
<svg class="abs" style="left:852px;top:9.6px" width="17" height="13.6" viewBox="0 0 17 13.6"><rect x="0.6" y="0.6" width="15.8" height="9.8" rx="0.8" fill="#f6f8f9" stroke="#4a4f55" stroke-width="1.2"></rect><path d="M6 2.8V5.2H10.4V2.8" fill="none" stroke="#7a8088" stroke-width="0.7"></path><path d="M8.5 10.6V12.2M4.8 12.8H12.2" stroke="#4a4f55" stroke-width="1.2"></path></svg>
<div class="abs" style="left:876.8px;top:2px;width:25.6px;height:28px;border-radius:3px;background:#e9f3f8;box-shadow:0 0 0 0.6px #cfdde5"></div>
<svg class="abs" style="left:881.6px;top:8.2px" width="16.4" height="15.4" viewBox="0 0 100 100" preserveAspectRatio="none"><path d="M71 2 L96 13 V87 L71 98 L32 61 L13 76 L2 70 L24 50 L2 30 L13 24 L32 39 Z M71 29 L44 50 L71 71 Z" fill="#1f8ad6" fill-rule="evenodd"></path><path d="M71 2 L96 13 V87 L71 98 Z" fill="#2aa0ee"></path></svg>
<div class="abs" style="left:885.6px;top:27px;width:8.4px;height:1.8px;border-radius:1px;background:#1a6fb8"></div>
<svg class="abs" style="left:1122.6px;top:12.8px" width="8.4" height="5" viewBox="0 0 8.4 5" fill="none" stroke="#1c1c1c" stroke-width="1.1"><path d="M0.5 4.5L4.2 0.8L7.9 4.5"></path></svg>
<svg class="abs" style="left:1136.8px;top:11.4px" width="11.4" height="8" viewBox="0 0 11.4 8"><path d="M2.6 7.6Q0.4 7.4 0.4 5.4Q0.6 3.6 2.4 3.4Q3 0.6 5.8 0.5Q8.4 0.6 9 3.2Q11 3.6 11 5.6Q10.8 7.4 8.8 7.6Z" fill="#8c8f93" stroke="#2a2c2e" stroke-width="0.8"></path></svg>
<svg class="abs" style="left:1157px;top:9px" width="8" height="13" viewBox="0 0 8 13" fill="none" stroke="#3573c4" stroke-width="1"><rect x="2.4" y="0.5" width="3.2" height="7" rx="1.6"></rect><path d="M0.6 5.4Q0.6 9.4 4 9.4Q7.4 9.4 7.4 5.4M4 9.6V12.4"></path></svg>
<svg class="abs" style="left:1177px;top:11.4px" width="10.8" height="8.6" viewBox="0 0 10.8 8.6" fill="none" stroke="#2a2c2e" stroke-width="0.95"><path d="M0.5 2.8Q5.4 -1.4 10.3 2.8M2.2 4.6Q5.4 1.8 8.6 4.6M3.8 6.4Q5.4 5 7 6.4"></path><circle cx="5.4" cy="7.7" r="0.7" fill="#2a2c2e" stroke="none"></circle></svg>
<svg class="abs" style="left:1192.6px;top:11px" width="8" height="9.4" viewBox="0 0 8 9.4" fill="none" stroke="#2a2c2e" stroke-width="0.9"><path d="M0.5 3.2H2.2L4.6 0.8V8.6L2.2 6.2H0.5Z"></path><path d="M6 3Q7.2 4.7 6 6.4"></path></svg>
<svg class="abs" style="left:1209.4px;top:11px" width="10.6" height="8.8" viewBox="0 0 10.6 8.8"><rect x="2" y="1.6" width="8.2" height="6.6" rx="1.2" fill="#1f1f20"></rect><circle cx="1.8" cy="1.8" r="1.6" fill="#1f1f20"></circle><rect x="7.4" y="3.2" width="1.8" height="1.4" fill="#e9eff2"></rect></svg>
<span class="t tk2" style="left: 1235.3px; top: 5.4px; width: 31.4px; letter-spacing: -0.52px;">12:30 PM</span>
<span class="t tk2" style="left: 1230px; top: 15.8px; width: 36.7px; letter-spacing: 0.03px;">9/27/2022</span>
</div>


</body></html>
